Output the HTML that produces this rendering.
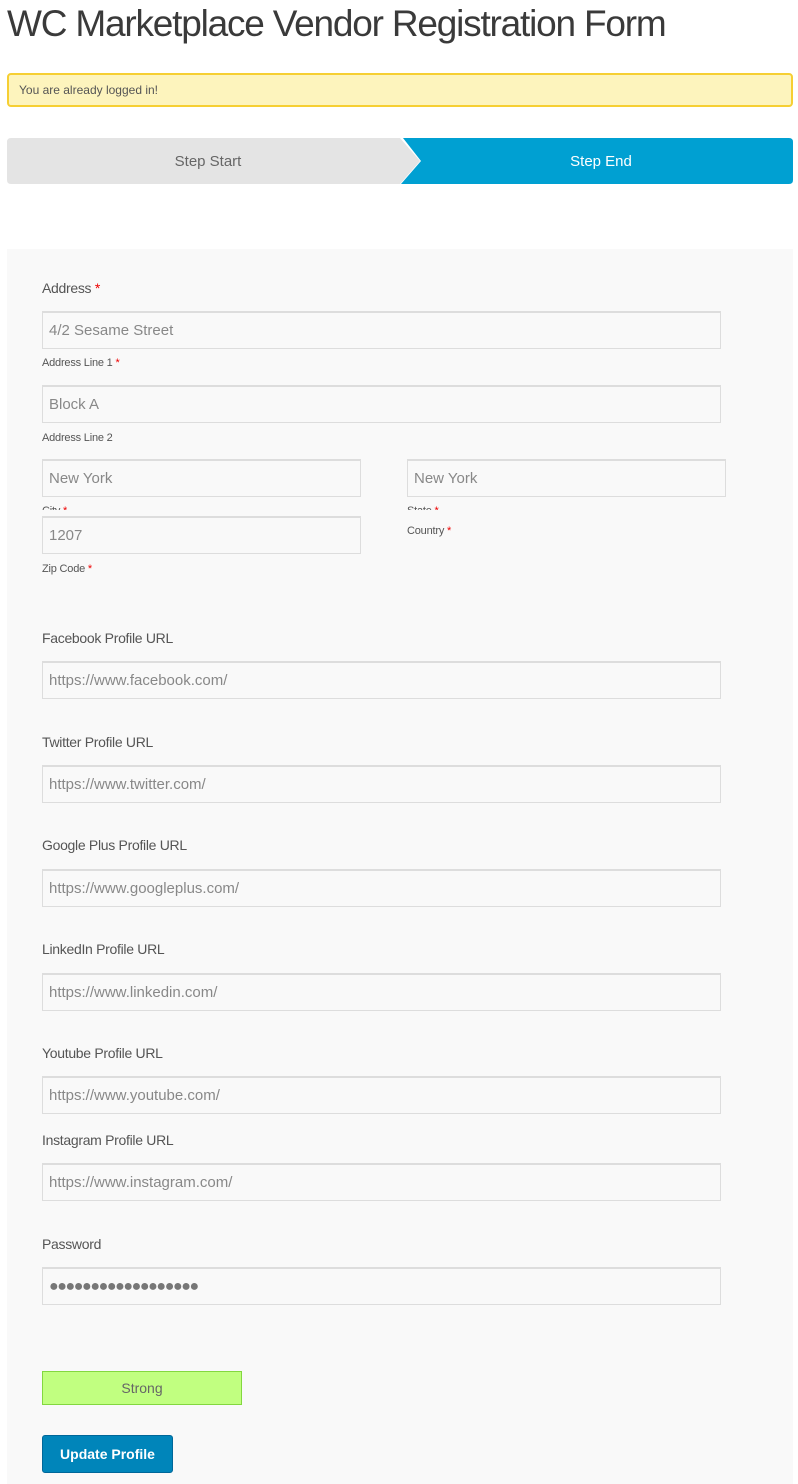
<!DOCTYPE html>
<html><head><meta charset="utf-8"><style>
body{margin:0;width:798px;height:1484px;background:#fff;font-family:"Liberation Sans",sans-serif;position:relative;overflow:hidden;color:#555}
.a{position:absolute}
h1{position:absolute;left:7px;top:3px;margin:0;font-weight:normal;font-size:37px;color:#3a3a3a;letter-spacing:-1.2px;white-space:nowrap}
.panel{position:absolute;left:7px;top:249px;width:786px;height:1235px;background:#f9f9f9}
.in{position:absolute;left:42px;width:679px;border:1px solid #ddd;border-top:2px solid #ddd;background:#f9f9f9;color:#888;font-size:15px;line-height:35px;padding-left:6px;box-sizing:border-box;height:38px}
.lb{position:absolute;left:42px;font-size:14px;color:#555;letter-spacing:-0.3px}
.sl{position:absolute;font-size:11px;color:#555;letter-spacing:-0.2px}
.r{color:#e00}
</style></head><body>
<h1>WC Marketplace Vendor Registration Form</h1>
<div class="a" style="left:7px;top:73px;width:786px;height:34px;box-sizing:border-box;background:#fdf4bd;border:2px solid #f6cf33;border-radius:4px;font-size:12px;line-height:30px;padding-left:10px;color:#555">You are already logged in!</div>
<svg class="a" style="left:7px;top:138px" width="786" height="46">
<path d="M4 0H393L413 23L393 46H4Q0 46 0 42V4Q0 0 4 0Z" fill="#e4e4e4"/>
<path d="M396 0H782Q786 0 786 4V42Q786 46 782 46H394L414 23Z" fill="#00a0d2"/>
<text x="201" y="28" text-anchor="middle" font-family="Liberation Sans" font-size="15" fill="#666">Step Start</text>
<text x="594" y="28" text-anchor="middle" font-family="Liberation Sans" font-size="15" fill="#fff">Step End</text>
</svg>
<div class="panel"></div>
<div class="lb" style="top:280px">Address <span class="r">*</span></div>
<div class="in" style="top:311px">4/2 Sesame Street</div>
<div class="sl" style="left:42px;top:357px">Address Line 1 <span class="r">*</span></div>
<div class="in" style="top:385px">Block A</div>
<div class="sl" style="left:42px;top:432px">Address Line 2</div>
<div class="in" style="top:459px;width:319px">New York</div>
<div class="in" style="top:459px;left:407px;width:319px">New York</div>
<div class="sl" style="left:42px;top:505px;height:5px;overflow:hidden">City <span class="r">*</span></div>
<div class="sl" style="left:407px;top:505px;height:5px;overflow:hidden">State <span class="r">*</span></div>
<div class="in" style="top:516px;width:319px">1207</div>
<div class="sl" style="left:407px;top:525px">Country <span class="r">*</span></div>
<div class="sl" style="left:42px;top:563px">Zip Code <span class="r">*</span></div>
<div class="lb" style="top:630px">Facebook Profile URL</div>
<div class="in" style="top:661px">https://www.facebook.com/</div>
<div class="lb" style="top:734px">Twitter Profile URL</div>
<div class="in" style="top:765px">https://www.twitter.com/</div>
<div class="lb" style="top:837px">Google Plus Profile URL</div>
<div class="in" style="top:869px">https://www.googleplus.com/</div>
<div class="lb" style="top:941px">LinkedIn Profile URL</div>
<div class="in" style="top:973px">https://www.linkedin.com/</div>
<div class="lb" style="top:1045px">Youtube Profile URL</div>
<div class="in" style="top:1076px">https://www.youtube.com/</div>
<div class="lb" style="top:1132px">Instagram Profile URL</div>
<div class="in" style="top:1163px">https://www.instagram.com/</div>
<div class="lb" style="top:1236px">Password</div>
<div class="in" style="top:1267px;font-size:16px;letter-spacing:-1.4px;color:#777">●●●●●●●●●●●●●●●●●●</div>
<div class="a" style="left:42px;top:1371px;width:200px;height:34px;box-sizing:border-box;background:#c1ff80;border:1px solid #83d83f;text-align:center;line-height:32px;font-size:14px;color:#666">Strong</div>
<div class="a" style="left:42px;top:1435px;width:131px;height:38px;box-sizing:border-box;background:#0085ba;border:1px solid #006799;border-radius:3px;text-align:center;line-height:36px;font-size:14px;font-weight:bold;color:#fff">Update Profile</div>
</body></html>
